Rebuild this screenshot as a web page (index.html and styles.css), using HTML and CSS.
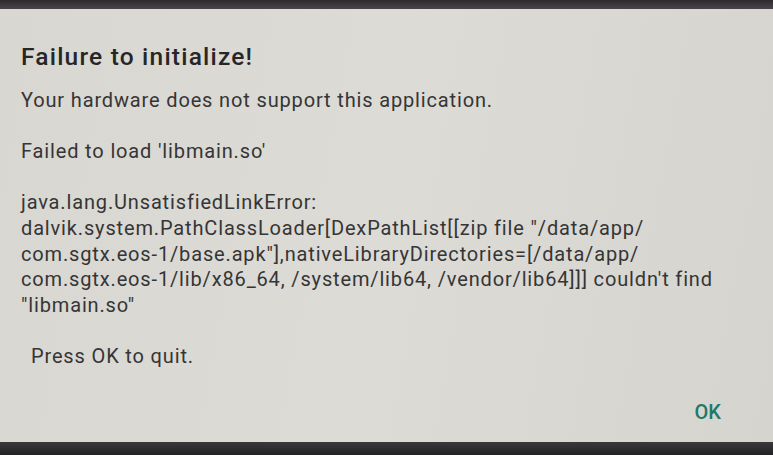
FILE: index.html
```html
<!DOCTYPE html>
<html>
<head>
<meta charset="utf-8">
<link rel="stylesheet" href="styles.css">
</head>
<body>
<div class="screen">
  <div class="top-bar"></div>
  <div class="dialog">
    <h1 class="title">Failure to initialize!</h1>
    <div class="message">
      <div class="line">Your hardware does not support this application.</div>
      <div class="line blank"></div>
      <div class="line">Failed to load 'libmain.so'</div>
      <div class="line blank"></div>
      <div class="line">java.lang.UnsatisfiedLinkError:</div>
      <div class="line">dalvik.system.PathClassLoader[DexPathList[[zip file "/data/app/</div>
      <div class="line">com.sgtx.eos-1/base.apk"],nativeLibraryDirectories=[/data/app/</div>
      <div class="line">com.sgtx.eos-1/lib/x86_64, /system/lib64, /vendor/lib64]]] couldn't find</div>
      <div class="line">"libmain.so"</div>
      <div class="line blank"></div>
      <div class="line indent">Press OK to quit.</div>
    </div>
    <div class="actions">
      <button class="ok">OK</button>
    </div>
  </div>
  <div class="bottom-bar"></div>
</div>
</body>
</html>
```
FILE: styles.css
```css
html, body {
  margin: 0;
  padding: 0;
  width: 773px;
  height: 455px;
  overflow: hidden;
  background: #2b2a2d;
}
.screen {
  display: flex;
  flex-direction: column;
  width: 773px;
  height: 455px;
}
.top-bar {
  height: 9px;
  background: linear-gradient(#2f2a30, #4a4449);
  flex: none;
}
.bottom-bar {
  height: 13px;
  background: linear-gradient(#3a3a3c, #222225);
  flex: none;
}
.dialog {
  flex: 1;
  display: flex;
  flex-direction: column;
  background: linear-gradient(100deg, #d9d7d1 0%, #dddbd6 50%, #d6d4cf 100%);
  padding: 33px 0 0 21px;
  font-family: Roboto, "Liberation Sans", sans-serif;
  color: #353536;
}
.title {
  margin: 0;
  font-size: 24.5px;
  font-weight: 500;
  line-height: 30px;
  letter-spacing: 1.2px;
  color: #262628;
}
.message {
  margin-top: 16px;
  font-size: 20px;
  line-height: 25.6px;
  letter-spacing: 0.85px;
}
.line {
  white-space: nowrap;
}
.blank {
  height: 25.6px;
}
.indent {
  padding-left: 10px;
}
.actions {
  flex: 1;
  display: flex;
  justify-content: flex-end;
  align-items: flex-start;
  padding: 30px 52px 0 0;
}
.ok {
  background: none;
  border: none;
  padding: 0;
  font-family: Roboto, "Liberation Sans", sans-serif;
  font-size: 20px;
  font-weight: 500;
  color: #1d7a68;
  line-height: 24px;
}
```
